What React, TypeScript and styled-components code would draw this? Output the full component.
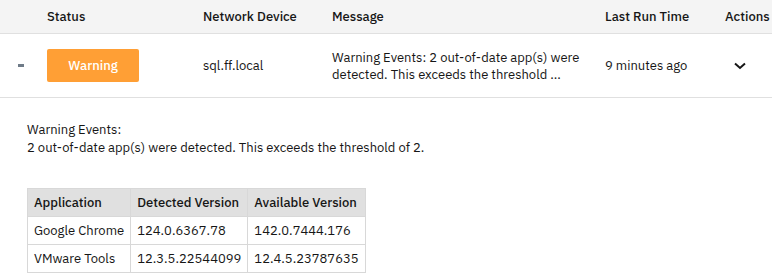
import React from "react";
import styled, { createGlobalStyle } from "styled-components";

const GlobalStyle = createGlobalStyle`
  body {
    margin: 0;
    background: #ffffff;
    font-family: "IBM Plex Sans", Roboto, "Liberation Sans", sans-serif;
    font-size: 13px;
    color: #161616;
  }
`;

const columns = "47px 156px 129px 273px 120px 1fr";

const apps = [
  { name: "Google Chrome", detected: "124.0.6367.78", available: "142.0.7444.176" },
  { name: "VMware Tools", detected: "12.3.5.22544099", available: "12.4.5.23787635" },
];

const App = () => {
  return (
    <Wrapper>
      <GlobalStyle />
      <HeaderRow>
        <span />
        <HeadCell>Status</HeadCell>
        <HeadCell>Network Device</HeadCell>
        <HeadCell>Message</HeadCell>
        <HeadCell>Last Run Time</HeadCell>
        <HeadCell>Actions</HeadCell>
      </HeaderRow>
      <Row>
        <Collapse aria-label="collapse" />
        <div>
          <StatusTag>Warning</StatusTag>
        </div>
        <Cell>sql.ff.local</Cell>
        <Message>
          Warning Events: 2 out-of-date app(s) were detected. This exceeds the threshold ...
        </Message>
        <Cell>9 minutes ago</Cell>
        <ActionCell>
          <svg width="12" height="8" viewBox="0 0 12 8">
            <path d="M1 1.5 L6 6 L11 1.5" fill="none" stroke="#161616" strokeWidth="2" />
          </svg>
        </ActionCell>
      </Row>
      <Details>
        <p>Warning Events:</p>
        <p>2 out-of-date app(s) were detected. This exceeds the threshold of 2.</p>
        <AppTable>
          <thead>
            <tr>
              <th style={{ width: 88 }}>Application</th>
              <th style={{ width: 104 }}>Detected Version</th>
              <th style={{ width: 98 }}>Available Version</th>
            </tr>
          </thead>
          <tbody>
            {apps.map((a) => (
              <tr key={a.name}>
                <td>{a.name}</td>
                <td>{a.detected}</td>
                <td>{a.available}</td>
              </tr>
            ))}
          </tbody>
        </AppTable>
      </Details>
    </Wrapper>
  );
};

const Wrapper = styled.main`
  width: 772px;
`;

const HeaderRow = styled.div`
  display: grid;
  grid-template-columns: ${columns};
  align-items: center;
  height: 33px;
  background: #f4f4f4;
  border-bottom: 1px solid #e0e0e0;
`;

const HeadCell = styled.span`
  font-weight: 500;
  white-space: nowrap;
`;

const Row = styled.div`
  display: grid;
  grid-template-columns: ${columns};
  align-items: center;
  height: 63px;
  border-bottom: 1px solid #e0e0e0;
`;

const Collapse = styled.span`
  display: block;
  width: 6px;
  height: 3px;
  margin-left: 18px;
  background: #6f7b88;
`;

const StatusTag = styled.div`
  display: flex;
  align-items: center;
  justify-content: center;
  width: 92px;
  height: 33px;
  border-radius: 2px;
  background: #ff9f35;
  color: #ffffff;
  font-weight: 500;
`;

const Cell = styled.span`
  white-space: nowrap;
`;

const Message = styled.span`
  width: 250px;
  line-height: 17px;
`;

const ActionCell = styled.span`
  display: flex;
  padding-left: 9px;
`;

const Details = styled.section`
  padding: 23px 27px 0;

  p {
    margin: 0;
    line-height: 18px;
  }
`;

const AppTable = styled.table`
  margin-top: 31px;
  border-collapse: collapse;

  th,
  td {
    border: 1px solid #d8d8d8;
    padding: 0 6px;
    height: 28px;
    box-sizing: border-box;
    text-align: left;
    white-space: nowrap;
  }

  th {
    background: #e0e0e0;
    font-weight: 500;
  }
`;

export default App;
